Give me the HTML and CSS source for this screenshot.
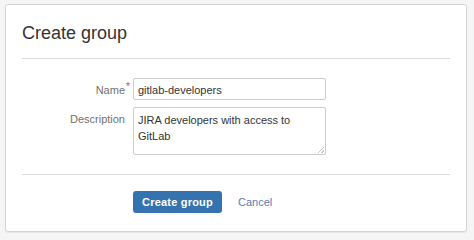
FILE: index.html
```html
<!DOCTYPE html>
<html>
<head>
<meta charset="utf-8">
<link rel="stylesheet" href="styles.css">
</head>
<body>
<div class="dialog">
  <div class="header"><h2 class="title">Create group</h2></div>
  <form class="form">
    <div class="row">
      <label class="label">Name<span class="req">*</span></label>
      <div class="field input">gitlab-developers</div>
    </div>
    <div class="row">
      <label class="label">Description</label>
      <div class="field textarea">JIRA developers with access to GitLab<span class="grip"></span></div>
    </div>
  </form>
  <div class="footer">
    <button class="btn" type="button">Create group</button>
    <a class="cancel" href="#">Cancel</a>
  </div>
</div>
</body>
</html>
```

FILE: styles.css
```css
html, body { margin: 0; padding: 0; }
body {
  background: #f5f5f5;
  font-family: "Liberation Sans", Arial, sans-serif;
  width: 474px;
  height: 240px;
  overflow: hidden;
}
.dialog {
  margin: 4px 7px 0 5px;
  height: 226px;
  background: #fff;
  border: 1px solid #d3d3d3;
  border-radius: 3px;
  box-shadow: 0 1px 1px rgba(0,0,0,0.06);
}
.header {
  margin: 0 16px;
  padding: 16px 0 13px;
  border-bottom: 1px solid #dcdcdc;
}
.title {
  margin: 0;
  font-size: 18px;
  line-height: 24px;
  font-weight: normal;
  color: #333;
}
.form {
  margin: 0 16px;
  padding: 19px 0 19px;
  border-bottom: 1px solid #dcdcdc;
  display: flex;
  flex-direction: column;
  gap: 7px;
}
.row {
  display: grid;
  grid-template-columns: 103px 193px;
  column-gap: 8px;
  align-items: start;
}
.label {
  text-align: right;
  font-size: 11px;
  color: #707070;
  line-height: 16px;
  padding-top: 4px;
  position: relative;
}
.req {
  color: #d04437;
  position: absolute;
  right: -5px;
  top: 1px;
  font-size: 10px;
}
.field {
  border: 1px solid #cccccc;
  border-radius: 2px;
  background: #fff;
  font-size: 11px;
  color: #333;
  box-sizing: border-box;
  padding: 3px 4px;
  line-height: 16px;
}
.input { height: 22px; }
.textarea {
  height: 48px;
  position: relative;
  padding-top: 4px;
}
.grip {
  position: absolute;
  right: 1px;
  bottom: 1px;
  width: 6px;
  height: 6px;
  background: linear-gradient(135deg, transparent 45%, #c8c8c8 45%, #c8c8c8 55%, transparent 55%, transparent 75%, #c8c8c8 75%, #c8c8c8 85%, transparent 85%);
}
.footer {
  margin: 0 16px;
  padding: 16px 0 0 111px;
  display: flex;
  align-items: center;
  gap: 16px;
}
.btn {
  height: 22px;
  width: 89px;
  padding: 0;
  border: 0;
  border-radius: 3px;
  background: #3572b0;
  color: #fff;
  font-family: "Liberation Sans", Arial, sans-serif;
  font-weight: bold;
  font-size: 11px;
  letter-spacing: 0.2px;
}
.cancel {
  color: #5680b4;
  font-size: 11px;
  text-decoration: none;
}
```
